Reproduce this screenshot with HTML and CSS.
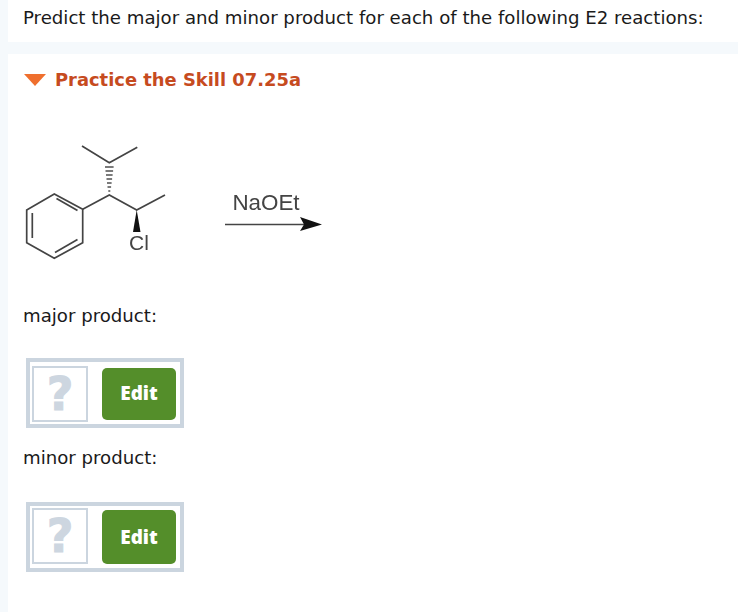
FILE: index.html
```html
<!DOCTYPE html>
<html lang="en">
<head>
<meta charset="utf-8">
<title>Predict the major and minor product</title>
<link rel="stylesheet" href="styles.css">
</head>
<body>
<div class="panel intro"><p class="prompt">Predict the major and minor product for each of the following E2 reactions:</p></div>
<main class="panel content">
  <h2 class="skill"><svg class="caret" viewBox="0 0 22 12" width="22" height="12" aria-hidden="true"><polygon points="0,0 22,0 11,12" fill="#ef6f2e"/></svg>Practice the Skill 07.25a</h2>
  <svg class="reaction" viewBox="0 0 330 150" width="330" height="150" role="img" aria-label="Reaction scheme">
    <g class="bond">
      <polyline points="82,16 109.3,32.7 137.3,17.3"/>
      <polyline points="82.7,79.3 109.3,65 136.7,80 165,65"/>
      <polygon points="82.7,79.3 54.3,64 26.7,80 26.7,112.7 54.3,128.3 82.7,112.7"/>
      <line x1="56.5" y1="68.5" x2="77.5" y2="80.5"/>
      <line x1="32.3" y1="83" x2="32.3" y2="108"/>
      <line x1="55" y1="122.5" x2="77.5" y2="109.5"/>
    </g>
    <g class="hash">
      <line x1="105" y1="37" x2="113.600" y2="37"/>
      <line x1="105.500" y1="41" x2="113.100" y2="41"/>
      <line x1="106" y1="45" x2="112.600" y2="45"/>
      <line x1="106.500" y1="49" x2="112.100" y2="49"/>
      <line x1="107" y1="53" x2="111.600" y2="53"/>
      <line x1="107.500" y1="57" x2="111.100" y2="57"/>
      <line x1="108.300" y1="61" x2="110.300" y2="61"/>
    </g>
    <polygon class="solid" points="136.7,80 133,102 140.500,102"/>
    <text class="atom" x="139" y="120" text-anchor="middle">Cl</text>
    <text class="atom reagent" x="266" y="80" text-anchor="middle">NaOEt</text>
    <line class="bond" x1="225" y1="94.500" x2="304" y2="94.500"/>
    <polygon class="solid" points="300,87 322,94.500 300,101 304,94.500"/>
  </svg>
  <p class="label major">major product:</p>
  <div class="answer first">
    <div class="slot">?</div>
    <button class="edit" type="button">Edit</button>
  </div>
  <p class="label minor">minor product:</p>
  <div class="answer second">
    <div class="slot">?</div>
    <button class="edit" type="button">Edit</button>
  </div>
</main>
</body>
</html>
```
FILE: styles.css
```css
* { box-sizing: border-box; }
html, body { margin: 0; height: 100%; }
body {
  background: #f5f9fc;
  padding-left: 8px;
  font-family: "DejaVu Sans", Verdana, sans-serif;
  color: #1a1a1a;
  overflow: hidden;
}
.panel { background: #fff; }
.intro { height: 42px; padding: 7px 0 0 15px; }
.prompt { margin: 0; font-size: 18.15px; line-height: 22px; white-space: nowrap; }
.content { margin-top: 12px; height: 558px; padding: 14px 0 0 18px; display: flex; flex-direction: column; align-items: flex-start; }
.skill {
  margin: 0 0 0 -2px;
  display: flex;
  align-items: center;
  gap: 9px;
  height: 24px;
  font-size: 17.9px;
  line-height: 24px;
  font-weight: 700;
  color: #c64b1f;
  white-space: nowrap;
}
.caret { flex: none; }
.reaction { display: block; margin: 38px 0 0 -26px; filter: blur(0.5px); }
.bond { fill: none; stroke: #444; stroke-width: 1.7; }
.hash { stroke: #333; stroke-width: 1.3; }
.solid { fill: #111; }
.atom { font-family: "Liberation Sans", Arial, sans-serif; font-size: 21px; fill: #444; }
.reagent { font-size: 22.4px; }
.label { margin: 0; font-size: 18.15px; line-height: 22px; white-space: nowrap; }
.major { margin: 25px 0 0 -3px; }
.minor { margin: 19px 0 0 -3px; }
.answer {
  width: 158px;
  height: 70px;
  border: 4px solid #cbd5df;
  display: flex;
  align-items: flex-start;
  padding-left: 2px;
  gap: 14px;
}
.first { margin-top: 31px; padding-top: 4px; }
.second { margin-top: 33px; padding-top: 2px; }
.slot {
  width: 56px;
  height: 56px;
  border: 2px solid #cbd5df;
  display: flex;
  align-items: center;
  justify-content: center;
  color: #cdd6e0;
  font-size: 46px;
  font-weight: 700;
  line-height: 1;
  -webkit-text-stroke: 1px #cdd6e0;
}
.edit {
  width: 74px;
  height: 52px;
  margin-top: 2px;
  border: 0;
  border-radius: 5px;
  background: #548e2a;
  color: #fff;
  font-family: "Open Sans", "DejaVu Sans", sans-serif;
  font-size: 19px;
  font-weight: 800;
  padding: 0 0 3px;
}
.second .edit { height: 54px; padding-bottom: 1px; }
```
